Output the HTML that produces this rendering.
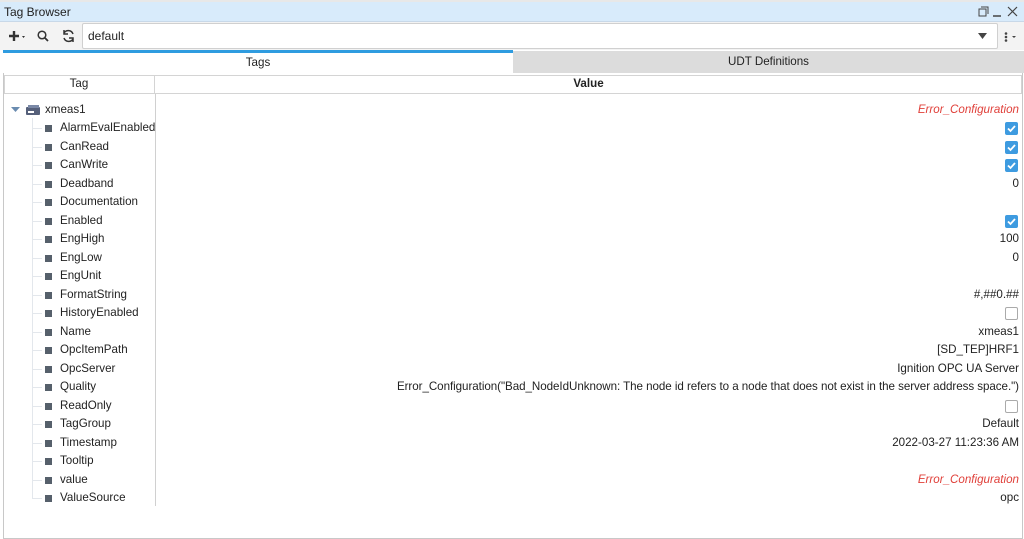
<!DOCTYPE html>
<html><head><style>
*{margin:0;padding:0;box-sizing:border-box}
body{width:1024px;height:539px;background:#fff;font-family:"Liberation Sans","DejaVu Sans",sans-serif;font-size:11.6px;color:#222;position:relative;overflow:hidden}
.a{position:absolute}
.row{position:absolute;left:0;width:1024px;height:18px;line-height:18px}
.row .n{position:absolute;left:60px}
.row .sq{position:absolute;left:45px;top:6px;width:7px;height:7px;background:#56606b}
.row .ln{position:absolute;left:32px;top:9px;width:10px;height:1px;background:#e3e7ec}
.row .v{position:absolute;right:5px;text-align:right;white-space:nowrap}
.err{color:#e0403a;font-style:italic}
.cb{position:absolute;right:6px;top:3px;width:13px;height:13px;border-radius:2px;background:#3e9be0}
.cb svg{position:absolute;left:1px;top:1px}
.ucb{position:absolute;right:6px;top:3px;width:13px;height:13px;border-radius:2px;border:1px solid #aaa;background:#fff}
</style></head><body>
<div class="a" style="left:0;top:0;width:1024px;height:22px;background:#d8ebfb;border-top:2px solid #e8e8e8;border-bottom:1px solid #c8d8e8"></div>
<div class="a" style="left:4px;top:5px;font-size:12px">Tag Browser</div>
<svg class="a" style="left:978px;top:6px" width="44" height="12"><rect x="1" y="3" width="7" height="7" fill="none" stroke="#444"/><path d="M3 1H10V8" fill="none" stroke="#444"/><path d="M15 10H23" stroke="#444" stroke-width="1.5"/><path d="M30 1L39 10M39 1L30 10" stroke="#444" stroke-width="1.2"/></svg>
<div class="a" style="left:0;top:22px;width:1024px;height:28px;background:#f3f3f3"></div>
<svg class="a" style="left:6px;top:28px" width="72" height="16"><path d="M3 8H13M8 3V13" stroke="#333" stroke-width="2.4"/><path d="M16 8L19 8L17.5 10Z" fill="#333"/><circle cx="36" cy="7" r="3.8" fill="none" stroke="#333" stroke-width="1.5"/><path d="M39 10L42 13" stroke="#333" stroke-width="1.8"/><path d="M67 6A5 5 0 0 0 58 5M58 2V6H62M58 10A5 5 0 0 0 67 11M67 14V10H63" fill="none" stroke="#333" stroke-width="1.5"/></svg>
<div class="a" style="left:82px;top:23px;width:916px;height:26px;background:#fff;border:1px solid #d0d0d0;border-radius:2px"></div>
<div class="a" style="left:88px;top:29px;font-size:12px">default</div>
<svg class="a" style="left:978px;top:32px" width="46" height="10"><path d="M0 1H9L4.5 7Z" fill="#444"/><circle cx="28" cy="1.5" r="1.3" fill="#444"/><circle cx="28" cy="5" r="1.3" fill="#444"/><circle cx="28" cy="8.5" r="1.3" fill="#444"/><path d="M34 4H38L36 6Z" fill="#444"/></svg>
<div class="a" style="left:3px;top:50px;width:510px;height:23px;background:#fff;border-top:3px solid #2f9ce0;text-align:center;line-height:19px">Tags</div>
<div class="a" style="left:513px;top:51px;width:511px;height:22px;background:#dcdcdc;text-align:center;line-height:22px">UDT Definitions</div>
<div class="a" style="left:3px;top:73px;width:1020px;height:466px;border:1px solid #c8c8c8;border-top:none;border-right:1px solid #c8c8c8"></div>
<div class="a" style="left:4px;top:75px;width:1018px;height:19px;border:1px solid #d4d4d4;background:#fff"></div>
<div class="a" style="left:4px;top:75px;width:151px;height:19px;text-align:center;line-height:18px;border-right:1px solid #d4d4d4">Tag</div>
<div class="a" style="left:155px;top:75px;width:867px;height:19px;text-align:center;line-height:18px;font-weight:bold">Value</div>
<div class="a" style="left:155px;top:94px;width:1px;height:412px;background:#d0d0d0"></div>
<div class="a" style="left:32px;top:118px;width:1px;height:380px;background:#e3e7ec"></div>
<div class="row" style="top:101px"><svg class="a" style="left:11px;top:6px" width="10" height="6"><path d="M0 0H9L4.5 5Z" fill="#6a8cb0"/></svg><svg class="a" style="left:25px;top:3px" width="16" height="12"><rect x="1" y="3" width="14" height="8" rx="1" fill="#56607a"/><rect x="3" y="1" width="11" height="3" fill="#7a88a6"/><rect x="3" y="7" width="6" height="2" fill="#fff"/></svg><span class="a" style="left:45px">xmeas1</span><span class="v err">Error_Configuration</span></div>
<div class="row" style="top:119px"><i class="ln"></i><i class="sq"></i><span class="n">AlarmEvalEnabled</span><span class="cb"><svg width="11" height="11"><path d="M2 5.5L4.5 8L9 3" stroke="#fff" stroke-width="1.8" fill="none"/></svg></span></div>
<div class="row" style="top:137.5px"><i class="ln"></i><i class="sq"></i><span class="n">CanRead</span><span class="cb"><svg width="11" height="11"><path d="M2 5.5L4.5 8L9 3" stroke="#fff" stroke-width="1.8" fill="none"/></svg></span></div>
<div class="row" style="top:156px"><i class="ln"></i><i class="sq"></i><span class="n">CanWrite</span><span class="cb"><svg width="11" height="11"><path d="M2 5.5L4.5 8L9 3" stroke="#fff" stroke-width="1.8" fill="none"/></svg></span></div>
<div class="row" style="top:174.5px"><i class="ln"></i><i class="sq"></i><span class="n">Deadband</span><span class="v">0</span></div>
<div class="row" style="top:193px"><i class="ln"></i><i class="sq"></i><span class="n">Documentation</span></div>
<div class="row" style="top:211.5px"><i class="ln"></i><i class="sq"></i><span class="n">Enabled</span><span class="cb"><svg width="11" height="11"><path d="M2 5.5L4.5 8L9 3" stroke="#fff" stroke-width="1.8" fill="none"/></svg></span></div>
<div class="row" style="top:230px"><i class="ln"></i><i class="sq"></i><span class="n">EngHigh</span><span class="v">100</span></div>
<div class="row" style="top:248.5px"><i class="ln"></i><i class="sq"></i><span class="n">EngLow</span><span class="v">0</span></div>
<div class="row" style="top:267px"><i class="ln"></i><i class="sq"></i><span class="n">EngUnit</span></div>
<div class="row" style="top:285.5px"><i class="ln"></i><i class="sq"></i><span class="n">FormatString</span><span class="v">#,##0.##</span></div>
<div class="row" style="top:304px"><i class="ln"></i><i class="sq"></i><span class="n">HistoryEnabled</span><span class="ucb"></span></div>
<div class="row" style="top:322.5px"><i class="ln"></i><i class="sq"></i><span class="n">Name</span><span class="v">xmeas1</span></div>
<div class="row" style="top:341px"><i class="ln"></i><i class="sq"></i><span class="n">OpcItemPath</span><span class="v">[SD_TEP]HRF1</span></div>
<div class="row" style="top:359.5px"><i class="ln"></i><i class="sq"></i><span class="n">OpcServer</span><span class="v">Ignition OPC UA Server</span></div>
<div class="row" style="top:378px"><i class="ln"></i><i class="sq"></i><span class="n">Quality</span><span class="v" style="letter-spacing:-0.05px">Error_Configuration("Bad_NodeIdUnknown: The node id refers to a node that does not exist in the server address space.")</span></div>
<div class="row" style="top:396.5px"><i class="ln"></i><i class="sq"></i><span class="n">ReadOnly</span><span class="ucb"></span></div>
<div class="row" style="top:415px"><i class="ln"></i><i class="sq"></i><span class="n">TagGroup</span><span class="v">Default</span></div>
<div class="row" style="top:433.5px"><i class="ln"></i><i class="sq"></i><span class="n">Timestamp</span><span class="v">2022-03-27 11:23:36 AM</span></div>
<div class="row" style="top:452px"><i class="ln"></i><i class="sq"></i><span class="n">Tooltip</span></div>
<div class="row" style="top:470.5px"><i class="ln"></i><i class="sq"></i><span class="n">value</span><span class="v err">Error_Configuration</span></div>
<div class="row" style="top:489px"><i class="ln"></i><i class="sq"></i><span class="n">ValueSource</span><span class="v">opc</span></div>
</body></html>
